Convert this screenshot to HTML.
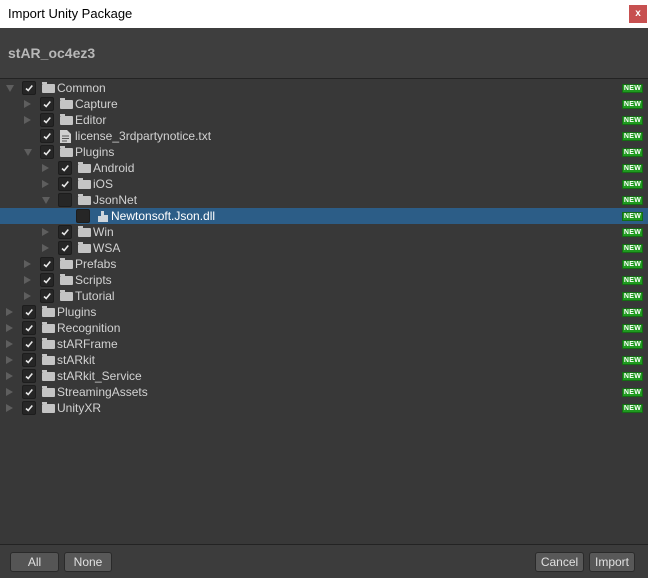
<!DOCTYPE html>
<html><head><meta charset="utf-8"><style>
*{margin:0;padding:0;box-sizing:border-box}
body{width:648px;height:578px;background:#383838;font-family:"Liberation Sans",sans-serif;position:relative;overflow:hidden}
.title{position:absolute;left:0;top:0;width:648px;height:28px;background:#fff;color:#000;font-size:13px;line-height:27px;padding-left:8px}
.close{position:absolute;left:629px;top:5px;width:18px;height:18px;background:#c75050;color:#fff;font-size:10px;font-weight:bold;text-align:center;line-height:17px}
.head{position:absolute;left:0;top:28px;width:648px;height:51px;background:#3e3e3e;border-bottom:1px solid #232323}
.head span{position:absolute;left:8px;top:17px;color:#b8b8b8;font-size:14px;font-weight:bold}
.row{position:absolute;left:0;width:648px;height:16px;color:#d2d2d2;font-size:12px}
.sel{background:#2c5d87;color:#fff}
.ar{position:absolute;top:4px;width:0;height:0}
.r{border-left:7px solid #5e5e5e;border-top:4px solid transparent;border-bottom:4px solid transparent}
.d{top:5px;border-top:7px solid #5e5e5e;border-left:4.5px solid transparent;border-right:4.5px solid transparent}
.cb{position:absolute;top:1px;width:14px;height:14px;background:#262626;border:1px solid #1d1d1d;border-radius:2px}
.cb svg{position:absolute;left:1px;top:1px}
.fo{position:absolute;top:4px;width:13px;height:9px;background:#c4c4c4;border-radius:1px}
.fo:before{content:"";position:absolute;left:0;top:-2px;width:5px;height:2px;background:#c4c4c4}
.t{position:absolute;top:1px;line-height:15px}
.new{position:absolute;left:622px;top:4px;width:21px;height:9px;background:#1f9a1f;border:1px solid #156c15;color:#fff;font-size:7px;font-weight:bold;line-height:8px;text-align:center;letter-spacing:0.3px}
.bot{position:absolute;left:0;top:544px;width:648px;height:34px;background:#3c3c3c;border-top:1px solid #232323}
.btn{position:absolute;top:552px;height:20px;background:#585858;border:1px solid #2a2a2a;border-radius:3px;color:#e0e0e0;font-size:12px;text-align:center;line-height:18px}
</style></head><body>
<div class="title">Import Unity Package</div><div class="close">x</div>
<div class="head"><span>stAR_oc4ez3</span></div>
<div id="list"></div>
<div class="bot"></div>
<div class="btn" style="left:10px;width:49px;background:#555">All</div>
<div class="btn" style="left:64px;width:48px">None</div>
<div class="btn" style="left:535px;width:49px">Cancel</div>
<div class="btn" style="left:589px;width:46px">Import</div>
<script>
var rows=[[0,'d',1,'f','Common'],[1,'r',1,'f','Capture'],[1,'r',1,'f','Editor'],[1,'',1,'t','license_3rdpartynotice.txt'],[1,'d',1,'f','Plugins'],[2,'r',1,'f','Android'],[2,'r',1,'f','iOS'],[2,'d',0,'f','JsonNet'],[3,'',0,'l','Newtonsoft.Json.dll'],[2,'r',1,'f','Win'],[2,'r',1,'f','WSA'],[1,'r',1,'f','Prefabs'],[1,'r',1,'f','Scripts'],[1,'r',1,'f','Tutorial'],[0,'r',1,'f','Plugins'],[0,'r',1,'f','Recognition'],[0,'r',1,'f','stARFrame'],[0,'r',1,'f','stARkit'],[0,'r',1,'f','stARkit_Service'],[0,'r',1,'f','StreamingAssets'],[0,'r',1,'f','UnityXR']];
var h='';
rows.forEach(function(r,i){var L=r[0]*18;var top=80+16*i;
h+='<div class="row'+(i==8?' sel':'')+'" style="top:'+top+'px">';
if(r[1])h+='<div class="ar '+r[1]+'" style="left:'+(6+L)+'px"></div>';
h+='<div class="cb" style="left:'+(22+L)+'px">'+(r[2]?'<svg width="10" height="10"><path d="M2 5.5 L4.2 7.5 L8.3 2.5" stroke="#e8e8e8" stroke-width="1.6" fill="none"/></svg>':'')+'</div>';
if(r[3]=='f')h+='<div class="fo" style="left:'+(42+L)+'px"></div>';
else if(r[3]=='t')h+='<svg style="position:absolute;left:'+(60)+'px;top:2px" width="11" height="13"><path d="M0 0H7L11 4V13H0Z" fill="#d0d0d0"/><path d="M2 6H9M2 8.5H9M2 11H7" stroke="#555" stroke-width="1"/></svg>';
else h+='<svg style="position:absolute;left:'+(98)+'px;top:3px" width="10" height="11"><path d="M3 0H6V4H10V11H0V5H3Z" fill="#cfd6dc"/></svg>';
h+='<div class="t" style="left:'+(57+L)+'px">'+r[4]+'</div><div class="new">NEW</div></div>';});
document.getElementById('list').innerHTML=h;
</script>
</body></html>
